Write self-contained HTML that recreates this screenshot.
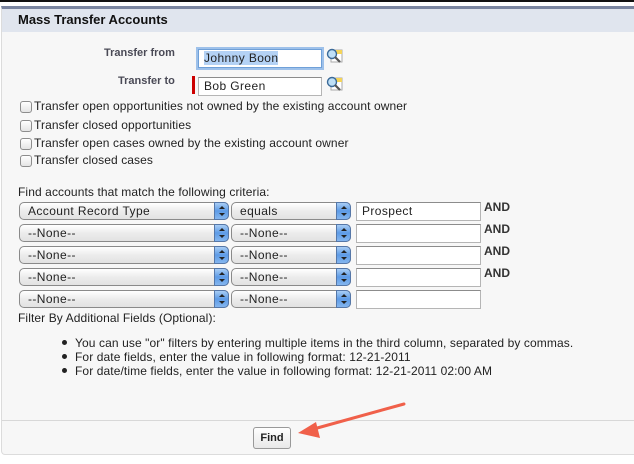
<!DOCTYPE html>
<html><head><style>
*{margin:0;padding:0;box-sizing:border-box}
body{width:634px;height:464px;background:#fff;position:relative;overflow:hidden;font-family:"Liberation Sans",Arial,sans-serif;color:#222;font-size:12px}
.a{position:absolute;white-space:nowrap}
.t{letter-spacing:.1px}
.sel{position:absolute;height:18px;border:1px solid #8a8a8a;border-radius:5px;background:linear-gradient(#fff,#ececec 50%,#e2e2e2);font-size:12px;line-height:16px;padding-left:8px;letter-spacing:.4px}
.sel .ar{position:absolute;right:-1px;top:-1px;width:15px;height:18px;border-radius:0 5px 5px 0;background:linear-gradient(#a9cdf5,#5d9be6 50%,#84b6ef);border:1px solid #5577a8}
.sel .ar:before{content:"";position:absolute;left:4px;top:3px;border:3px solid transparent;border-bottom:3px solid #222;border-top:0}
.sel .ar:after{content:"";position:absolute;left:4px;top:10px;border:3px solid transparent;border-top:3px solid #222;border-bottom:0}
.inp{position:absolute;height:19px;border:1px solid #b5b5b5;border-top-color:#8c8c8c;background:#fff;font-size:12px;line-height:17px;padding-left:5px;letter-spacing:.4px}
.cb{position:absolute;left:20px;width:12px;height:12px;border:1px solid #8d8d8d;border-radius:3px;background:linear-gradient(#fff,#e4e4e4)}
.lbl{position:absolute;font-weight:bold;font-size:11px;color:#4a4a56}
.and{position:absolute;left:484px;font-size:12px;font-weight:bold;color:#333}
.bl{position:absolute;left:62px;width:5px;height:5px;border-radius:50%;background:#222}
</style></head><body>
<div class="a" style="left:0;top:0;width:634px;height:2px;background:#111"></div>
<div class="a" style="left:1px;top:6px;width:640px;height:449px;background:#f7f7f7;border:1px solid #dcdcdc;border-top:3px solid #7a85a0;border-radius:0 0 0 4px"></div>
<div class="a" style="left:2px;top:9px;width:632px;height:23px;background:#e0e5ee"></div>
<div class="a" style="left:18px;top:12px;font-weight:bold;font-size:13px;color:#111">Mass Transfer Accounts</div>

<div class="lbl" style="left:104px;top:47px">Transfer from</div>
<div class="lbl" style="left:118px;top:75px">Transfer to</div>
<div class="inp" style="left:198px;top:49px;width:124px;border:1px solid #6fa0d8;box-shadow:0 0 0 2px #9ec1ea">
<span style="background:#b4d2f5">Johnny Boon</span></div>
<div class="a" style="left:192px;top:76px;width:3px;height:18px;background:#c00"></div>
<div class="inp" style="left:198px;top:77px;width:124px">Bob Green</div>
<svg class="a" style="left:326px;top:47px" width="18" height="18" viewBox="0 0 18 18"><rect x="5" y="3" width="11" height="12" fill="#fff" stroke="#aaa"/><rect x="10" y="3" width="6" height="4" fill="#f5d458"/><circle cx="6" cy="7" r="4.5" fill="#bfe0f7" stroke="#3b6a98" stroke-width="1.4"/><path d="M9 10l5 5" stroke="#555" stroke-width="2.2"/></svg>
<svg class="a" style="left:326px;top:75px" width="18" height="18" viewBox="0 0 18 18"><rect x="5" y="3" width="11" height="12" fill="#fff" stroke="#aaa"/><rect x="10" y="3" width="6" height="4" fill="#f5d458"/><circle cx="6" cy="7" r="4.5" fill="#bfe0f7" stroke="#3b6a98" stroke-width="1.4"/><path d="M9 10l5 5" stroke="#555" stroke-width="2.2"/></svg>

<div class="cb" style="top:101px"></div><div class="a t" style="left:34px;top:99px">Transfer open opportunities not owned by the existing account owner</div>
<div class="cb" style="top:120px"></div><div class="a t" style="left:34px;top:118px">Transfer closed opportunities</div>
<div class="cb" style="top:138px"></div><div class="a t" style="left:34px;top:136px">Transfer open cases owned by the existing account owner</div>
<div class="cb" style="top:155px"></div><div class="a t" style="left:34px;top:153px">Transfer closed cases</div>

<div class="a t" style="left:18px;top:185px">Find accounts that match the following criteria:</div>

<div class="sel" style="left:19px;top:202px;width:210px">Account Record Type<span class="ar"></span></div>
<div class="sel" style="left:231px;top:202px;width:120px">equals<span class="ar"></span></div>
<div class="inp" style="left:356px;top:202px;width:125px">Prospect</div>
<div class="and" style="top:200px">AND</div>

<div class="sel" style="left:19px;top:224px;width:210px">--None--<span class="ar"></span></div>
<div class="sel" style="left:231px;top:224px;width:120px">--None--<span class="ar"></span></div>
<div class="inp" style="left:356px;top:224px;width:125px"></div>
<div class="and" style="top:222px">AND</div>

<div class="sel" style="left:19px;top:246px;width:210px">--None--<span class="ar"></span></div>
<div class="sel" style="left:231px;top:246px;width:120px">--None--<span class="ar"></span></div>
<div class="inp" style="left:356px;top:246px;width:125px"></div>
<div class="and" style="top:244px">AND</div>

<div class="sel" style="left:19px;top:268px;width:210px">--None--<span class="ar"></span></div>
<div class="sel" style="left:231px;top:268px;width:120px">--None--<span class="ar"></span></div>
<div class="inp" style="left:356px;top:268px;width:125px"></div>
<div class="and" style="top:266px">AND</div>

<div class="sel" style="left:19px;top:290px;width:210px">--None--<span class="ar"></span></div>
<div class="sel" style="left:231px;top:290px;width:120px">--None--<span class="ar"></span></div>
<div class="inp" style="left:356px;top:290px;width:125px"></div>

<div class="a t" style="left:18px;top:311px">Filter By Additional Fields (Optional):</div>
<div class="bl" style="top:340px"></div><div class="a t" style="left:75px;top:336px">You can use "or" filters by entering multiple items in the third column, separated by commas.</div>
<div class="bl" style="top:354px"></div><div class="a t" style="left:75px;top:350px">For date fields, enter the value in following format: 12-21-2011</div>
<div class="bl" style="top:368px"></div><div class="a t" style="left:75px;top:364px">For date/time fields, enter the value in following format: 12-21-2011 02:00 AM</div>

<div class="a" style="left:2px;top:420px;width:632px;height:1px;background:#d8d8d8"></div>
<div class="a" style="left:253px;top:427px;width:38px;height:22px;border:1px solid #999;border-radius:3px;background:linear-gradient(#fff,#e8e8e8);font-weight:bold;font-size:11px;text-align:center;line-height:20px;color:#222">Find</div>
<svg class="a" style="left:290px;top:398px" width="120" height="45" viewBox="0 0 120 45"><path d="M114 6L20 32" stroke="#f0604a" stroke-width="3" stroke-linecap="round"/><path d="M8 35L26 24L30 40Z" fill="#f0604a"/></svg>
</body></html>
